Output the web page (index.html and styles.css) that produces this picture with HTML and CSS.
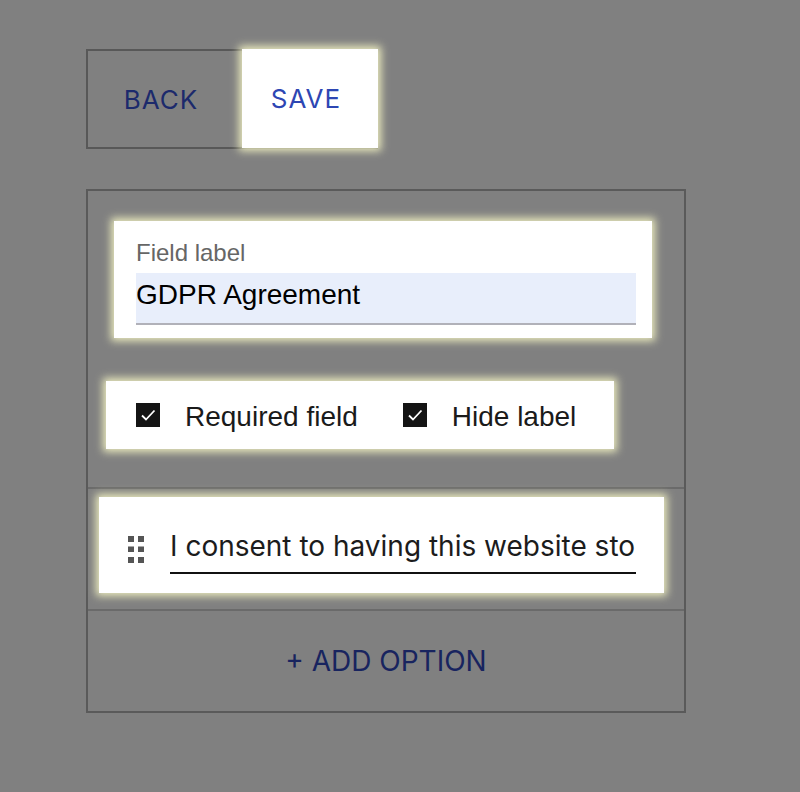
FILE: index.html
```html
<!DOCTYPE html>
<html lang="en">
<head>
<meta charset="utf-8">
<title>Field editor</title>
<link rel="stylesheet" href="styles.css">
</head>
<body>
<div class="page">
  <div class="btn-group">
    <button class="btn btn-back" type="button">BACK</button>
    <button class="btn btn-save glow" type="button">SAVE</button>
  </div>

  <div class="card">
    <div class="section section-top">
      <div class="field-box glow">
        <label class="field-label" for="lbl">Field label</label>
        <input id="lbl" class="field-input" type="text" value="GDPR Agreement">
      </div>
      <div class="checks glow">
        <label class="check">
          <span class="box"><svg viewBox="0 0 24 24" width="24" height="24"><path d="M6 12.5l4 4 8.5-9" fill="none" stroke="#fff" stroke-width="1.8"/></svg></span>
          <span class="check-text">Required field</span>
        </label>
        <label class="check">
          <span class="box"><svg viewBox="0 0 24 24" width="24" height="24"><path d="M6 12.5l4 4 8.5-9" fill="none" stroke="#fff" stroke-width="1.8"/></svg></span>
          <span class="check-text">Hide label</span>
        </label>
      </div>
    </div>

    <div class="section section-options">
      <div class="option-row glow">
        <svg class="handle" viewBox="0 0 16 27" width="16" height="27">
          <rect x="0" y="0" width="6" height="6" fill="#555"/>
          <rect x="10" y="0" width="6" height="6" fill="#555"/>
          <rect x="0" y="10.5" width="6" height="5.5" fill="#555"/>
          <rect x="10" y="10.5" width="6" height="5.5" fill="#555"/>
          <rect x="0" y="21" width="6" height="6" fill="#555"/>
          <rect x="10" y="21" width="6" height="6" fill="#555"/>
        </svg>
        <input class="option-input" type="text" value="I consent to having this website store my submitted information">
      </div>
    </div>

    <div class="section section-add">
      <button class="add-btn" type="button">+ ADD OPTION</button>
    </div>
  </div>
</div>
</body>
</html>
```

FILE: styles.css
```css
* { box-sizing: border-box; }

html, body {
  margin: 0;
  padding: 0;
  background: #808080;
}

body {
  font-family: "Liberation Sans", Arial, sans-serif;
  width: 800px;
  height: 792px;
  overflow: hidden;
}

.page {
  padding: 49px 0 0 86px;
}

.glow {
  background: #ffffff;
  box-shadow: 0 0 8px 3px rgba(246, 246, 196, 0.9);
}

/* Buttons */
.btn-group {
  display: flex;
  width: 292px;
  height: 100px;
  border: 2px solid #585858;
}

.btn {
  font-family: Inter, "Liberation Sans", sans-serif;
  font-size: 26px;
  letter-spacing: 1px;
  border: none;
  background: transparent;
  padding: 0 8px 0 0;
  cursor: pointer;
}

.btn-back {
  width: 154px;
  color: #1c2a6c;
}

.btn-save {
  width: 136px;
  height: 99px;
  margin: -2px -2px -2px 0;
  color: #2d46b3;
  background: #fff;
}

/* Card */
.card {
  margin-top: 40px;
  width: 600px;
  border: 2px solid #5a5a5a;
}

.section-top {
  padding: 30px 32px 38px 26px;
  border-bottom: 2px solid #6a6a6a;
}

.field-box {
  width: 538px;
  height: 117px;
  padding: 18px 16px 0 22px;
  display: flex;
  flex-direction: column;
}

.field-label {
  font-size: 24px;
  color: #666666;
  line-height: 27px;
}

.field-input {
  margin-top: 7px;
  width: 500px;
  height: 52px;
  padding: 0 0 6px 0;
  border: none;
  border-bottom: 2px solid #b1b1b9;
  background: #e8eefb;
  font-family: "Liberation Sans", Arial, sans-serif;
  font-size: 28px;
  color: #000;
  outline: none;
}

.checks {
  margin-top: 43px;
  margin-left: -8px;
  width: 508px;
  height: 68px;
  display: flex;
  align-items: center;
  padding-left: 30px;
  gap: 45px;
}

.check {
  display: flex;
  align-items: center;
  gap: 25px;
}

.box {
  width: 24px;
  height: 24px;
  background: #141414;
  display: block;
  margin-top: -1px;
}

.box svg { display: block; }

.check-text {
  font-size: 28px;
  color: #1a1a1a;
  margin-top: 3px;
}

/* Options */
.section-options {
  padding: 8px 0 16px 11px;
  border-bottom: 2px solid #6a6a6a;
}

.option-row {
  width: 565px;
  height: 96px;
  display: flex;
  align-items: flex-start;
  padding: 31px 28px 0 29px;
}

.handle {
  display: block;
  margin-top: 8px;
  flex: none;
}

.option-input {
  margin-left: 26px;
  width: 466px;
  height: 46px;
  padding: 0 0 8px 0;
  border: none;
  border-bottom: 2px solid #111;
  background: transparent;
  font-family: Inter, "Liberation Sans", sans-serif;
  font-size: 28px;
  color: #1c1c1c;
  outline: none;
}

/* Add option */
.section-add {
  height: 100px;
  display: flex;
  align-items: center;
  justify-content: center;
}

.add-btn {
  font-family: Inter, "Liberation Sans", sans-serif;
  font-size: 28px;
  color: #18245f;
  background: transparent;
  border: none;
  padding: 0;
}
```
